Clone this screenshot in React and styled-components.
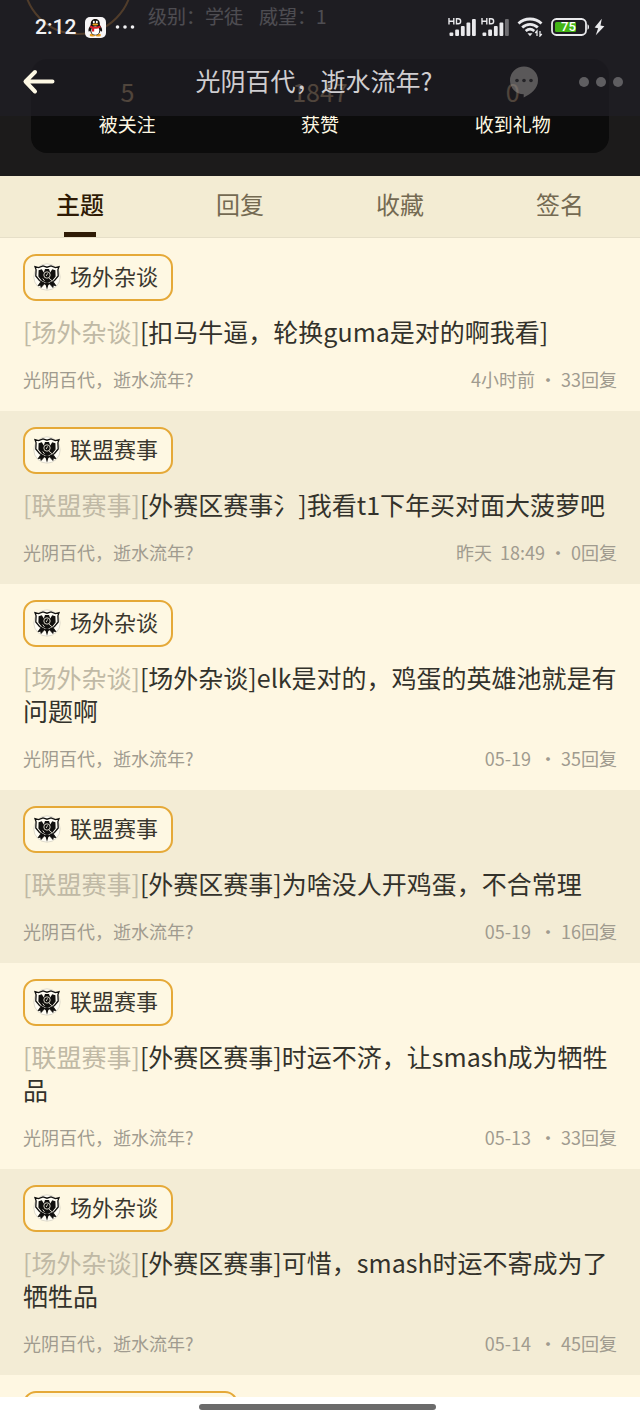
import React from 'react'
import styled, { createGlobalStyle } from 'styled-components'

const GlobalStyle = createGlobalStyle`
  * {
    box-sizing: border-box;
  }
  body {
    margin: 0;
    background: #fff;
    font-family: "Noto Sans CJK SC", "Noto Sans", sans-serif;
  }
  button {
    margin: 0;
    padding: 0;
    border: 0;
    background: none;
    font: inherit;
    color: inherit;
    cursor: pointer;
  }
  svg {
    display: block;
    flex: none;
  }
`

const Page = styled.div`
  display: flex;
  flex-direction: column;
  height: 100vh;
`

/* ---------- header ---------- */

const Header = styled.header`
  position: relative;
  flex: none;
  display: flex;
  flex-direction: column;
  justify-content: flex-end;
  height: 176px;
  padding: 0 31px 23px;
  overflow: hidden;
  background: #1c1b1b;
`

const Profile = styled.div`
  display: flex;
  align-items: flex-end;
  gap: 15px;
  margin: 0 -8px 24px;
`

const Avatar = styled.div`
  flex: none;
  width: 110px;
  height: 110px;
  border: 2px solid #ffa840;
  border-radius: 50%;
`

const Level = styled.div`
  display: flex;
  gap: 16px;
  margin-bottom: 6px;
  font-size: 19px;
  line-height: 26px;
  color: #f4f4f4;
`

const Stats = styled.div`
  display: grid;
  grid-template-columns: repeat(3, 1fr);
  padding: 16px 0 15px;
  border-radius: 16px;
  background: #0c0c0c;
  text-align: center;
`

const StatNumber = styled.div`
  font-size: 25px;
  line-height: 32px;
  color: #ffd090;
`

const StatLabel = styled.div`
  padding-top: 3px;
  font-size: 19px;
  line-height: 28px;
  color: #fdf7e2;
`

const TopBar = styled.div`
  position: absolute;
  top: 0;
  left: 0;
  right: 0;
  height: 116px;
  background: rgba(31, 30, 36, 0.78);
`

const StatusBar = styled.div`
  display: flex;
  align-items: center;
  justify-content: space-between;
  height: 48px;
  padding: 6px 35px 0;
  color: #f2f2f4;
`

const StatusGroup = styled.div`
  display: flex;
  align-items: center;
  gap: ${props => props.$gap}px;
`

const Clock = styled.span`
  font-family: Roboto, sans-serif;
  font-size: 21px;
  font-weight: 500;
  line-height: 24px;
`

const Nav = styled.nav`
  display: grid;
  grid-template-columns: 1fr auto 1fr;
  align-items: center;
  height: 68px;
  padding: 0 17px 0 5px;
`

const BackButton = styled.button`
  justify-self: start;
  padding-left: 17px;
`

const Title = styled.h1`
  margin: 0;
  padding-bottom: 4px;
  font-size: 25px;
  font-weight: 400;
  line-height: 36px;
  color: #cfcdd0;
`

const NavActions = styled.div`
  display: flex;
  align-items: center;
  justify-self: end;
  gap: 40px;
`

/* ---------- tabs ---------- */

const Tabs = styled.div`
  flex: none;
  display: grid;
  grid-template-columns: repeat(4, 1fr);
  height: 62px;
  border-bottom: 1px solid #e6dfc8;
  background: #f3ecd3;
`

const Tab = styled.button`
  display: flex;
  flex-direction: column;
  align-items: center;
  justify-content: space-between;
  padding-top: 10px;
  font-size: 24px;
  font-weight: ${props => (props.$active ? 500 : 400)};
  line-height: 36px;
  color: ${props => (props.$active ? '#2f1b05' : '#746a52')};

  &::after {
    content: "";
    width: 32px;
    height: 5px;
    background: ${props => (props.$active ? '#2f1b05' : 'transparent')};
  }
`

/* ---------- list ---------- */

const List = styled.main`
  flex: 1;
  min-height: 0;
  overflow: hidden;
  background: #fef7e2;
`

const Row = styled.article`
  padding: 16px 23px 19px;
  background: ${props => (props.$alt ? '#f3ecd5' : '#fef7e2')};
`

const Badge = styled.button`
  display: flex;
  align-items: center;
  gap: 9px;
  width: ${props => (props.$wide ? '215px' : 'auto')};
  height: 47px;
  padding: 0 13px 2px 8px;
  border: 2px solid #e5a938;
  border-radius: 13px;
  background: #fef8e3;
  font-size: 22px;
  line-height: 30px;
  color: #3a372e;
`

const BadgeLabel = styled.span`
  padding-bottom: 3px;
`

const PostTitle = styled.h2`
  margin: 14px -8px 18px 0;
  font-size: 25px;
  font-weight: 400;
  line-height: 33px;
  color: #33322b;
  word-break: break-all;
`

const Tag = styled.span`
  color: #c0b9a5;
`

const Meta = styled.div`
  display: flex;
  justify-content: space-between;
  font-size: 18px;
  line-height: 26px;
  color: #a09b8f;
  white-space: pre;
`

/* ---------- bottom ---------- */

const HomeBar = styled.div`
  flex: none;
  display: flex;
  justify-content: center;
  height: 25px;
  padding-top: 7px;
  background: #fff;

  &::after {
    content: "";
    width: 37%;
    height: 6px;
    margin-right: 5px;
    border-radius: 3px;
    background: #6b6b6b;
  }
`

/* ---------- drawings ---------- */

function QQIcon () {
  return (
    <svg width="21" height="21" viewBox="0 0 21 21">
      <rect width="21" height="21" rx="5" fill="#f7f5f6" />
      <ellipse cx="7.4" cy="18" rx="2.8" ry="1.5" fill="#e59a1c" />
      <ellipse cx="13.2" cy="18" rx="2.8" ry="1.5" fill="#e59a1c" />
      <path d="M10.3 2C6.9 2 5.6 4.4 5.7 8c-1.2 1.9-2.5 3.7-2.2 6 .2 1 1 .6 1.6-.5.5 3 2.6 4.800 5.200 4.800s4.700-1.800 5.200-4.800c.6 1.100 1.400 1.500 1.600.5.3-2.300-1-4.100-2.200-6C15 4.400 13.700 2 10.300 2z" fill="#17120f" />
      <ellipse cx="10.3" cy="13.6" rx="4" ry="4.2" fill="#fff" />
      <ellipse cx="8.8" cy="5.1" rx="1" ry="1.4" fill="#fff" />
      <ellipse cx="11.8" cy="5.1" rx="1" ry="1.4" fill="#fff" />
      <ellipse cx="10.3" cy="7.6" rx="3" ry="1" fill="#f0a51e" />
      <path d="M5.400 8.600c3 1.800 6.800 1.800 9.800 0l.6 1.800c-2.300 1.200-4.600 1.500-6.600 1.300v2.800H7v-3.200c-.9-.2-1.600-.5-2.200-.9z" fill="#d9202a" />
    </svg>
  )
}

function MoreDots () {
  return (
    <svg width="20" height="4" viewBox="0 0 20 4" fill="#f2f2f4">
      <circle cx="2.5" cy="2" r="1.8" />
      <circle cx="10" cy="2" r="1.8" />
      <circle cx="17.5" cy="2" r="1.8" />
    </svg>
  )
}

function Signal ({ weak }) {
  return (
    <svg width="28" height="20" viewBox="0 0 28 20" fill="#e9e9ec">
      <g fill="none" stroke="#e9e9ec" strokeWidth="1.4">
        <path d="M1 1v6.500M5.800 1v6.500M1 4.200h4.800M8.500 1.700h1.600a2.500 2.500 0 0 1 0 5.100H8.500z" />
      </g>
      <rect x="1.5" y="15.5" width="3.8" height="3.5" rx="1" />
      <rect x="7.2" y="12.5" width="3.8" height="6.5" rx="1" />
      <rect x="12.9" y="9" width="3.8" height="10" rx="1" />
      <rect x="18.5" y="5.5" width="3.8" height="13.5" rx="1" />
      <rect x="24" y="2" width="3.8" height="17" rx="1" opacity={weak ? 0.4 : 1} />
    </svg>
  )
}

function Wifi () {
  return (
    <svg width="32" height="20" viewBox="-3 0 32 20" fill="none" stroke="#e9e9ec">
      <path d="M1.500 6.500c6.300-6 16.700-6 23 0" strokeWidth="2.8" />
      <path d="M5.200 10.500c4.400-4.200 11.200-4.200 15.600 0" strokeWidth="2.8" />
      <path d="M8.700 14c2.600-2.400 6-2.400 8.600 0" strokeWidth="2.6" />
      <path d="M10.500 16.200h5L13 19.300z" fill="#e9e9ec" stroke="none" />
      <path d="M20 19v-5l-1.800 2M23 14v5l1.800-2" strokeWidth="1.3" />
    </svg>
  )
}

function Battery () {
  return (
    <svg width="38" height="18" viewBox="0 0 38 18">
      <rect x="1" y="1" width="34" height="16" rx="4.5" fill="none" stroke="#e9e9ec" strokeWidth="1.8" />
      <rect x="4" y="4" width="21" height="10" rx="1.5" fill="#43b516" />
      <path d="M36.500 6.300c2 .6 2 4.800 0 5.400z" fill="#e9e9ec" />
      <text x="17.5" y="13.4" textAnchor="middle" fontFamily="Roboto, sans-serif" fontWeight="500" fontSize="13" fill="#fff">75</text>
    </svg>
  )
}

function Bolt () {
  return (
    <svg width="11" height="18" viewBox="0 0 11 18" fill="#e9e9ec">
      <path d="M7.800.8L.6 9.600l3.500.7-2.300 6.900 8.600-9-3.900-.8z" />
    </svg>
  )
}

function BackArrow () {
  return (
    <svg width="33" height="26" viewBox="0 0 33 26" fill="none" stroke="#fdf8e4" strokeWidth="4" strokeLinecap="round" strokeLinejoin="round">
      <path d="M30.500 12.500H4M13 3L3.500 12.500 13 22.500" />
    </svg>
  )
}

function ChatIcon () {
  return (
    <svg width="30" height="32" viewBox="0 0 30 32">
      <path d="M15 .5a14 14 0 0 1 14 14c0 8-7 13.500-14.300 17v-3.200C7 28.300 1 22 1 14.500A14 14 0 0 1 15 .5z" fill="#8f8d8b" fillOpacity=".55" />
      <g fill="#252428">
        <circle cx="8" cy="14.500" r="1.8" />
        <circle cx="15" cy="14.500" r="1.8" />
        <circle cx="22" cy="14.500" r="1.8" />
      </g>
    </svg>
  )
}

function MenuDots () {
  return (
    <svg width="44" height="12" viewBox="0 0 44 12" fill="#5f5e61">
      <circle cx="5" cy="6" r="5" />
      <circle cx="22" cy="6" r="5" />
      <circle cx="39" cy="6" r="5" />
    </svg>
  )
}

function Crest () {
  return (
    <svg width="28" height="28" viewBox="0 0 28 28">
      <circle cx="14" cy="14" r="13.2" fill="#fffdf4" stroke="#d3cebf" strokeWidth=".7" />
      <path d="M2 3.600l3.600 1L10 3l4 1.200L18 3l4.400 1.600 3.600-1-1.100 3.200.3 6.200-3.700 4.500L14 22l-7.500-4.500L2.800 13l.3-6.200z" fill="#fffdf4" stroke="#11100e" strokeWidth="1.3" />
      <path d="M5.600 7.200l3.200-1 2 3.300 1.200-3.500h4l1.200 3.500 2-3.300 3.200 1 .2 6.300-3.600 4.500-5 2-5-2-3.600-4.500z" fill="#11100e" />
      <path d="M8 18.500l-3 4.200 2.600-.5.500 2.300 4-4.500M20 18.500l3 4.200-2.600-.5-.5 2.300-4-4.500" fill="#11100e" stroke="#11100e" strokeWidth=".8" />
      <path d="M11.800 19.500h4.400l-1 3-1.200 4.300-1.200-4.300z" fill="#11100e" />
      <g fill="none" stroke="#e9e5d8" strokeWidth=".9">
        <circle cx="14" cy="12" r="3.2" />
        <path d="M14.600 10.400l-1.400 2.600M15.800 15l3.500 3M9.700 15.500l1.800 2.300" />
      </g>
    </svg>
  )
}

/* ---------- data ---------- */

const stats = [
  { number: '5', label: '被关注' },
  { number: '1847', label: '获赞' },
  { number: '0', label: '收到礼物' }
]

const tabs = ['主题', '回复', '收藏', '签名']

const author = '光阴百代，逝水流年?'

const posts = [
  { board: '场外杂谈', title: '[扣马牛逼，轮换guma是对的啊我看]', time: '4小时前 ', replies: 33 },
  { board: '联盟赛事', title: '[外赛区赛事氵]我看t1下年买对面大菠萝吧', time: '昨天  18:49 ', replies: 0 },
  { board: '场外杂谈', title: '[场外杂谈]elk是对的，鸡蛋的英雄池就是有问题啊', time: '05-19  ', replies: 35 },
  { board: '联盟赛事', title: '[外赛区赛事]为啥没人开鸡蛋，不合常理', time: '05-19  ', replies: 16 },
  { board: '联盟赛事', title: '[外赛区赛事]时运不济，让smash成为牺牲品', time: '05-13  ', replies: 33 },
  { board: '场外杂谈', title: '[外赛区赛事]可惜，smash时运不寄成为了牺牲品', time: '05-14  ', replies: 45 }
]

function Post ({ post, alt }) {
  return (
    <Row $alt={alt}>
      <Badge>
        <Crest />
        <BadgeLabel>{post.board}</BadgeLabel>
      </Badge>
      <PostTitle>
        <Tag>[{post.board}]</Tag>{post.title}
      </PostTitle>
      <Meta>
        <span>{author}</span>
        <span>{post.time}· {post.replies}回复</span>
      </Meta>
    </Row>
  )
}

export default function App () {
  return (
    <Page>
      <GlobalStyle />
      <Header>
        <Profile>
          <Avatar />
          <Level>
            <span>级别：学徒</span>
            <span>威望：1</span>
          </Level>
        </Profile>
        <Stats>
          {stats.map(stat => (
            <div key={stat.label}>
              <StatNumber>{stat.number}</StatNumber>
              <StatLabel>{stat.label}</StatLabel>
            </div>
          ))}
        </Stats>
        <TopBar>
          <StatusBar>
            <StatusGroup $gap={9}>
              <Clock>2:12</Clock>
              <QQIcon />
              <MoreDots />
            </StatusGroup>
            <StatusGroup $gap={5}>
              <Signal />
              <Signal weak />
              <Wifi />
              <Battery />
              <Bolt />
            </StatusGroup>
          </StatusBar>
          <Nav>
            <BackButton aria-label="返回"><BackArrow /></BackButton>
            <Title>{author}</Title>
            <NavActions>
              <button aria-label="私信"><ChatIcon /></button>
              <button aria-label="更多"><MenuDots /></button>
            </NavActions>
          </Nav>
        </TopBar>
      </Header>
      <Tabs>
        {tabs.map((tab, i) => (
          <Tab key={tab} $active={i === 0}>{tab}</Tab>
        ))}
      </Tabs>
      <List>
        {posts.map((post, i) => (
          <Post key={i} post={post} alt={i % 2 === 1} />
        ))}
        <Row>
          <Badge $wide aria-label="版块" />
        </Row>
      </List>
      <HomeBar />
    </Page>
  )
}
